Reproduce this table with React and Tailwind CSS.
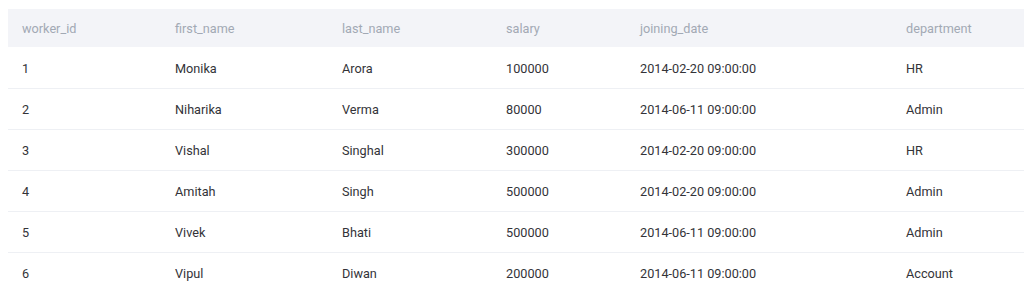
import React from 'react';

const columns = ['worker_id', 'first_name', 'last_name', 'salary', 'joining_date', 'department'];

const rows = [
  [1, 'Monika', 'Arora', 100000, '2014-02-20 09:00:00', 'HR'],
  [2, 'Niharika', 'Verma', 80000, '2014-06-11 09:00:00', 'Admin'],
  [3, 'Vishal', 'Singhal', 300000, '2014-02-20 09:00:00', 'HR'],
  [4, 'Amitah', 'Singh', 500000, '2014-02-20 09:00:00', 'Admin'],
  [5, 'Vivek', 'Bhati', 500000, '2014-06-11 09:00:00', 'Admin'],
  [6, 'Vipul', 'Diwan', 200000, '2014-06-11 09:00:00', 'Account'],
];

const widths = ['w-[153px]', 'w-[167px]', 'w-[164px]', 'w-[134px]', 'w-[266px]', 'w-[132px]'];

const App = () => {
  return (
    <main className="h-[299px] overflow-hidden bg-white pt-[9px] pl-2 font-['Roboto',sans-serif]">
      <table className="w-[1016px] table-fixed border-collapse text-left text-[12.7px]">
        <colgroup>
          {widths.map((w) => <col key={w} className={w} />)}
        </colgroup>
        <thead className="bg-[#f3f4f8] text-[#a2a9b4]">
          <tr className="h-[38px]">
            {columns.map((col) => (
              <th key={col} className="pl-[14px] pt-[2px] font-normal">{col}</th>
            ))}
          </tr>
        </thead>
        <tbody className="text-[#333338]">
          {rows.map((row, i) => (
            <tr key={row[0]} className={i < rows.length - 1 ? 'h-[41px] border-b border-[#eef0f4]' : 'h-[41px]'}>
              {row.map((cell, j) => (
                <td key={j} className="pl-[14px] pt-[2px]">{cell}</td>
              ))}
            </tr>
          ))}
        </tbody>
      </table>
    </main>
  );
};

export default App;
